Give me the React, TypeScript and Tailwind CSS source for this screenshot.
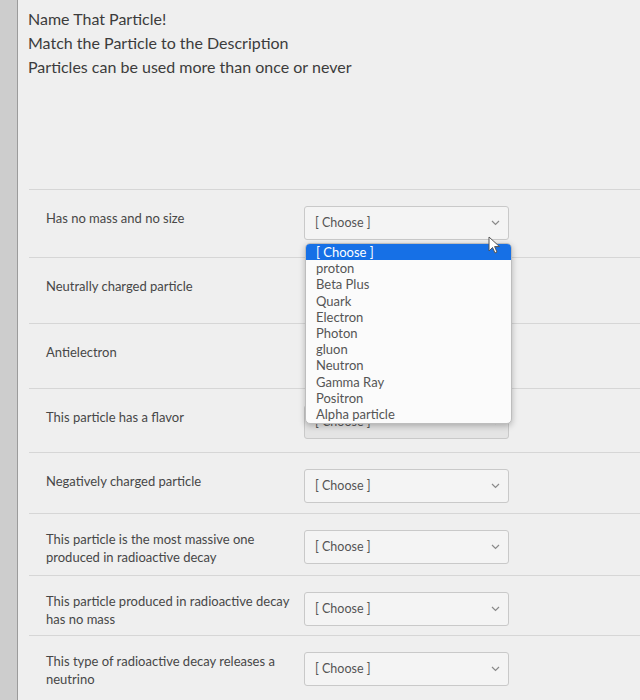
import React from "react";

const rows: { label: string; h: number }[] = [
  { label: "Has no mass and no size", h: 68 },
  { label: "Neutrally charged particle", h: 66 },
  { label: "Antielectron", h: 65 },
  { label: "This particle has a flavor", h: 64 },
  { label: "Negatively charged particle", h: 61 },
  { label: "This particle is the most massive one produced in radioactive decay", h: 62 },
  { label: "This particle produced in radioactive decay has no mass", h: 60 },
  { label: "This type of radioactive decay releases a neutrino", h: 65 },
];

const options = [
  "[ Choose ]",
  "proton",
  "Beta Plus",
  "Quark",
  "Electron",
  "Photon",
  "gluon",
  "Neutron",
  "Gamma Ray",
  "Positron",
  "Alpha particle",
];

const Chevron = () => (
  <svg width="9" height="6" viewBox="0 0 9 6" className="shrink-0">
    <path d="M1 1 L4.5 4.5 L8 1" fill="none" stroke="#8a8a8a" strokeWidth="1.2" />
  </svg>
);

const Select: React.FC<{ open?: boolean; dim?: boolean }> = ({ open, dim }) => (
  <div className="relative">
    <div
      className={`w-[205px] h-[34px] flex items-center justify-between pl-[10px] pr-[8px] border border-[#c9c9c9] rounded-[3px] text-[12.5px] text-[#555] ${
        dim ? "bg-[#e4e4e4]" : "bg-[#f4f4f4]"
      }`}
    >
      <span>[ Choose ]</span>
      <Chevron />
    </div>
    {open && (
      <>
        <div className="absolute left-[1px] top-[37px] w-[207px] z-10 bg-[#fbfbfb] border border-[#bdbdbd] rounded-[5px] shadow-[0_2px_6px_rgba(0,0,0,0.25)] pb-[1px] overflow-hidden">
          {options.map((o, i) => (
            <div
              key={o}
              className={`h-[16.2px] leading-[16.2px] pl-[10px] text-[13px] ${
                i === 0 ? "bg-[#1670e6] text-white" : "text-[#555]"
              }`}
            >
              {o}
            </div>
          ))}
        </div>
        <svg
          width="14"
          height="20"
          viewBox="0 0 14 20"
          className="absolute left-[184px] top-[30px] z-20"
        >
          <path
            d="M1 1 L1 15 L4.5 11.5 L7 17 L9 16 L6.6 10.6 L11.5 10.6 Z"
            fill="#fff"
            stroke="#555"
            strokeWidth="1"
            strokeLinejoin="round"
          />
        </svg>
      </>
    )}
  </div>
);

export default function App() {
  return (
    <div
      className="w-[640px] h-[700px] flex bg-[#efefef] overflow-hidden"
      style={{ fontFamily: "Lato, 'Open Sans', sans-serif" }}
    >
      <div className="w-[18px] shrink-0 bg-[#cdcdcd] border-r border-[#9b9b9b]" />
      <div className="flex-1 flex flex-col">
        <div className="pl-[10px] pt-[7px] text-[16px] leading-[24px] text-[#3c3c3c]">
          <div>Name That Particle!</div>
          <div>Match the Particle to the Description</div>
          <div>Particles can be used more than once or never</div>
        </div>
        <div className="ml-[11px] mt-[110px]">
          {rows.map((r, i) => (
            <div
              key={r.label}
              className="flex items-start border-t border-[#d6d6d6] pl-[17px] pt-[16px]"
              style={{ height: r.h }}
            >
              <div
                className={`w-[258px] pr-[4px] text-[13px] leading-[18px] text-[#474747] ${
                  r.label.length > 30 ? "pt-[0px]" : "pt-[3px]"
                }`}
              >
                {r.label}
              </div>
              {i >= 1 && i <= 2 ? null : <Select open={i === 0} dim={i === 3} />}
            </div>
          ))}
        </div>
      </div>
    </div>
  );
}
